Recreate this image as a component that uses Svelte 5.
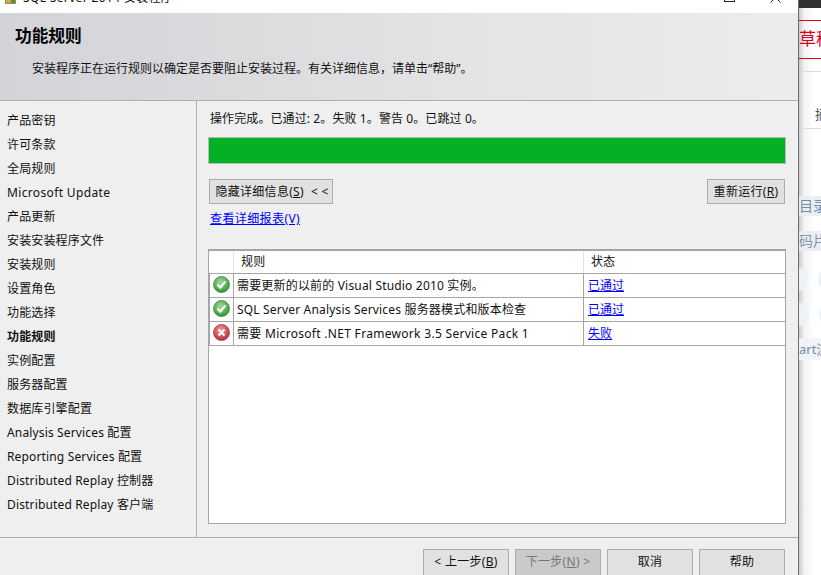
<script lang="ts">
  const steps = [
    '产品密钥', '许可条款', '全局规则', 'Microsoft Update', '产品更新', '安装安装程序文件',
    '安装规则', '设置角色', '功能选择', '功能规则', '实例配置', '服务器配置', '数据库引擎配置',
    'Analysis Services 配置', 'Reporting Services 配置', 'Distributed Replay 控制器', 'Distributed Replay 客户端'
  ];
  const current = '功能规则';

  const rules = [
    { ok: true, name: '需要更新的以前的 Visual Studio 2010 实例。', status: '已通过', wide: false },
    { ok: true, name: 'SQL Server Analysis Services 服务器模式和版本检查', status: '已通过', wide: false },
    { ok: false, name: '需要 Microsoft .NET Framework 3.5 Service Pack 1', status: '失败', wide: true }
  ];

  // latin-only labels run wider in the original UI font
  const isLatin = (s: string) => /^[\x00-\x7f]+$/.test(s);
</script>

<svg class="defs" width="0" height="0" aria-hidden="true">
  <defs>
    <radialGradient id="okFill" cx="45%" cy="35%" r="70%">
      <stop offset="0" stop-color="#a5d99a" />
      <stop offset="0.55" stop-color="#5fb25a" />
      <stop offset="1" stop-color="#2f8a35" />
    </radialGradient>
    <radialGradient id="errFill" cx="45%" cy="35%" r="70%">
      <stop offset="0" stop-color="#eaa0a4" />
      <stop offset="0.55" stop-color="#d5575f" />
      <stop offset="1" stop-color="#a82c36" />
    </radialGradient>
  </defs>
</svg>

<div class="desktop">
  <div class="window">
    <div class="titlebar">
      <svg class="app-icon" width="11" height="16" viewBox="0 0 11 16">
        <rect x="0" y="0" width="11" height="16" fill="#8a9a4a" />
        <rect x="1" y="9" width="5" height="6" fill="#d9a441" />
        <rect x="6" y="11" width="4" height="4" fill="#4f8f3f" />
      </svg>
      <span class="title">SQL Server 2014 安装程序</span>
      <span class="spacer"></span>
      <span class="max-box"></span>
      <svg class="close-x" width="11" height="11" viewBox="0 0 11 11">
        <path d="M0.5 0.5 L10.5 10.5 M10.5 0.5 L0.5 10.5" stroke="#222" stroke-width="1" fill="none" />
      </svg>
    </div>

    <header class="banner">
      <h1>功能规则</h1>
      <p>安装程序正在运行规则以确定是否要阻止安装过程。有关详细信息，请单击“帮助”。</p>
    </header>

    <div class="body">
      <nav class="sidebar">
        {#each steps as step}
          <div class="step" class:current={step === current} class:wide={isLatin(step)}>{step}</div>
        {/each}
      </nav>

      <main class="content">
        <div class="summary">操作完成。已通过: 2。失败 1。警告 0。已跳过 0。</div>
        <div class="progress"></div>

        <div class="actions">
          <button class="btn details">隐藏详细信息(<u>S</u>)<span class="chev">&lt; &lt;</span></button>
          <button class="btn rerun">重新运行(<u>R</u>)</button>
        </div>
        <a class="report" href="#report">查看详细报表(V)</a>

        <div class="grid">
          <div class="row head">
            <div class="cell icon"></div>
            <div class="cell name">规则</div>
            <div class="cell status">状态</div>
          </div>
          {#each rules as rule}
            <div class="row">
              <div class="cell icon">
                <svg width="17" height="17" viewBox="0 0 17 17">
                  {#if rule.ok}
                    <circle cx="8.5" cy="8.5" r="8" fill="url(#okFill)" stroke="#3c8c3f" stroke-width="0.8" />
                    <path d="M4.5 8.5 L7.3 11.6 L12.5 5.4" fill="none" stroke="#fff" stroke-width="2.2" />
                  {:else}
                    <circle cx="8.5" cy="8.5" r="8" fill="url(#errFill)" stroke="#a83a42" stroke-width="0.8" />
                    <path d="M5.5 5.5 L11.5 11.5 M11.5 5.5 L5.5 11.5" fill="none" stroke="#fff" stroke-width="2.2" />
                  {/if}
                </svg>
              </div>
              <div class="cell name" class:wide={rule.wide}>{rule.name}</div>
              <div class="cell status"><a href="#status">{rule.status}</a></div>
            </div>
          {/each}
        </div>
      </main>
    </div>

    <footer class="footer">
      <button class="btn nav">&lt; 上一步(<u>B</u>)</button>
      <button class="btn nav disabled">下一步(<u>N</u>) &gt;</button>
      <button class="btn nav">取消</button>
      <button class="btn nav">帮助</button>
    </footer>
  </div>

  <aside class="behind">
    <div class="topbar"></div>
    <div class="gap-a"></div>
    <div class="draft">草稿箱</div>
    <div class="gap-b"></div>
    <div class="tab">摘要</div>
    <div class="gap-c"></div>
    <div class="band first">目录</div>
    <div class="band second">码片</div>
    <div class="dots"><span></span><span></span></div>
    <div class="dots low"><span></span><span></span></div>
    <div class="band third">art流</div>
  </aside>
</div>

<style>
  :global(body) {
    margin: 0;
    background: #fff;
  }

  .defs {
    position: absolute;
  }

  .desktop {
    display: flex;
    width: 821px;
    height: 575px;
    overflow: hidden;
    font-family: "Noto Sans", "Noto Sans CJK SC", sans-serif;
    font-size: 12px;
    color: #111;
  }

  .window {
    width: 798px;
    height: 575px;
    flex: none;
    display: flex;
    flex-direction: column;
    background: #efefef;
    border-right: 1px solid #6e6e6e;
    overflow: hidden;
  }

  .titlebar {
    height: 13px;
    flex: none;
    display: flex;
    align-items: flex-end;
    background: #fff;
    padding: 0 0 0 5px;
    overflow: hidden;
  }

  .app-icon {
    flex: none;
    margin-bottom: 9px;
  }

  .title {
    margin: 0 0 7px 7px;
    font-size: 12px;
    line-height: 16px;
    letter-spacing: 0.35px;
    white-space: nowrap;
  }

  .spacer {
    flex: 1;
  }

  .max-box {
    width: 9px;
    height: 9px;
    border: 1px solid #222;
    margin: 0 35px 11px 0;
    flex: none;
  }

  .close-x {
    flex: none;
    margin: 0 17px 10px 0;
  }

  .banner {
    height: 87px;
    flex: none;
    background: linear-gradient(90deg, #d3d3d8 0%, #e4e4e5 60%, #ececec 100%);
    border-bottom: 1px solid #aeaeb6;
    overflow: hidden;
  }

  .banner h1 {
    margin: 11px 0 0 15px;
    font-size: 16.7px;
    line-height: 24px;
    font-weight: 700;
    color: #000;
  }

  .banner p {
    margin: 12px 0 0 32px;
    font-size: 12px;
    line-height: 18px;
    white-space: nowrap;
  }

  .body {
    display: flex;
    height: 436px;
    flex: none;
  }

  .sidebar {
    width: 196px;
    flex: none;
    padding-top: 8px;
    border-right: 1px solid #aeaeb6;
  }

  .step {
    height: 24px;
    line-height: 24px;
    padding-left: 7px;
    letter-spacing: 0.15px;
    white-space: nowrap;
  }

  .step.wide {
    letter-spacing: 0.35px;
  }

  .step.current {
    font-weight: 700;
  }

  .content {
    flex: 1;
    min-width: 0;
    padding: 9px 12px 0 11px;
  }

  .summary {
    height: 18px;
    line-height: 18px;
    margin-left: 2px;
    letter-spacing: 0.1px;
    white-space: nowrap;
  }

  .progress {
    height: 25px;
    margin-top: 9px;
    background: #06b025;
    border: 1px solid #b4bcb4;
  }

  .actions {
    display: flex;
    justify-content: space-between;
    margin: 15px 1px 0 1px;
  }

  .btn {
    font: inherit;
    color: #111;
    height: 25px;
    padding: 0 0 2px;
    background: #e1e1e1;
    border: 1px solid #adadad;
    letter-spacing: 0.3px;
    white-space: nowrap;
  }

  .details {
    width: 124px;
    padding-left: 2px;
  }

  .chev {
    margin-left: 7px;
  }

  .rerun {
    width: 78px;
  }

  .report {
    display: block;
    width: fit-content;
    height: 18px;
    line-height: 18px;
    margin: 6px 0 0 2px;
    letter-spacing: 0.4px;
    color: #0000ff;
  }

  .grid {
    height: 272px;
    margin-top: 21px;
    background: #fff;
    border: 1px solid #a6a6a6;
    border-top-width: 2px;
  }

  .row {
    display: grid;
    grid-template-columns: 25px 350px 1fr;
    height: 24px;
    box-sizing: border-box;
    border-bottom: 1px solid #a6a6a6;
    box-shadow: inset 1px 0 0 #a6a6a6;
  }

  .row.head {
    height: 23px;
    box-shadow: none;
  }

  .cell {
    display: flex;
    align-items: center;
    min-width: 0;
    padding-bottom: 2px;
    white-space: nowrap;
    border-right: 1px solid #a6a6a6;
  }

  .head .cell {
    border-right-color: #e4e4e4;
  }

  .cell:last-child,
  .head .cell:last-child {
    border-right: none;
  }

  .cell.icon {
    justify-content: center;
    padding-left: 1px;
  }

  .cell.name {
    padding-left: 3px;
    letter-spacing: 0.18px;
  }

  .cell.name.wide {
    letter-spacing: 0.3px;
  }

  .head .cell.name {
    padding-left: 7px;
  }

  .cell.status {
    padding-left: 4px;
  }

  .head .cell.status {
    padding-left: 7px;
  }

  .cell.status a {
    color: #0000ff;
  }

  .footer {
    flex: none;
    height: 38px;
    box-sizing: border-box;
    border-top: 1px solid #aeaeb6;
    padding: 11px 13px 0 0;
    display: flex;
    justify-content: flex-end;
    gap: 6px;
  }

  .btn.nav {
    width: 86px;
    height: 30px;
    padding-bottom: 6px;
  }

  .btn.disabled {
    background: #cacaca;
    color: #777;
  }

  .behind {
    flex: 1;
    min-width: 0;
    overflow: hidden;
    white-space: nowrap;
    background: linear-gradient(90deg, #c9c9c9 0, #f2f2f2 5px, #fff 14px);
    display: flex;
    flex-direction: column;
  }

  .topbar {
    height: 8px;
    flex: none;
    background: #303030;
  }

  .gap-a {
    height: 12px;
    flex: none;
  }

  .draft {
    height: 39px;
    flex: none;
    box-sizing: border-box;
    border-top: 1px solid #e00012;
    border-bottom: 1px solid #e00012;
    color: #d8001c;
    font-size: 17px;
    line-height: 36px;
  }

  .gap-b {
    height: 12px;
    flex: none;
    border-bottom: 1px solid #dddddd;
  }

  .tab {
    height: 57px;
    flex: none;
    box-sizing: border-box;
    padding-top: 33px;
    padding-left: 16px;
    line-height: 18px;
    font-size: 13px;
    color: #555;
    border-bottom: 1px solid #dddddd;
  }

  .gap-c {
    height: 67px;
    flex: none;
  }

  .band {
    height: 20px;
    flex: none;
    line-height: 20px;
    font-size: 14px;
    color: #7a8aa0;
    background: #e9eef5;
  }

  .band.second {
    margin-top: 15px;
    color: #8795a8;
  }

  .dots {
    display: flex;
    gap: 10px;
    margin: 16px 0 0 -16px;
    flex: none;
  }

  .dots span {
    width: 25px;
    height: 25px;
    border-radius: 50%;
    background: #edf2f7;
    flex: none;
  }

  .dots.low {
    margin-top: 10px;
    margin-left: -15px;
  }

  .band.third {
    margin-top: 11px;
    height: 22px;
    line-height: 22px;
    font-size: 13px;
    background: #f0f3f8;
  }
</style>
